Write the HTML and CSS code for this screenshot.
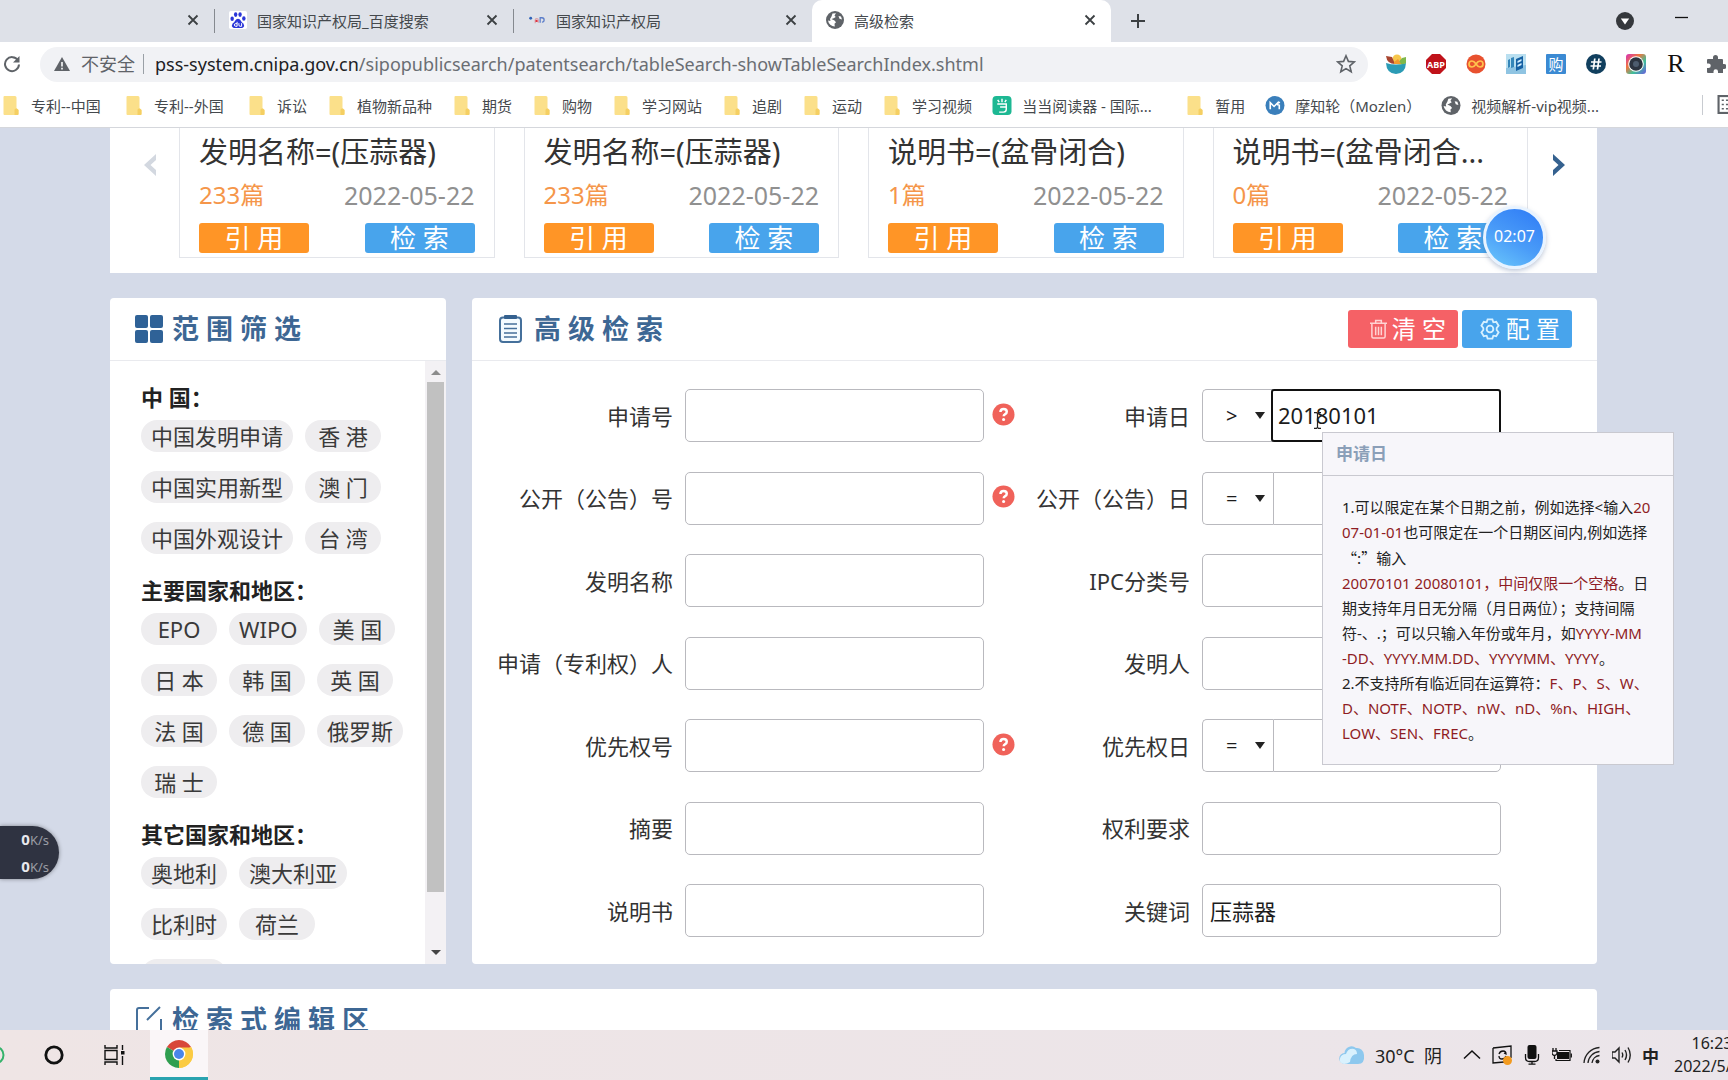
FILE: index.html
```html
<!DOCTYPE html>
<html lang="zh-CN">

<head>
  <meta charset="utf-8">
  <meta name="viewport" content="width=device-width, initial-scale=1.0">
  <title>高级检索</title>
  <link rel="stylesheet" href="styles.css">
</head>

<body>
  <svg class="sprite" aria-hidden="true">
    <symbol id="i-close" viewBox="0 0 12 12"><path d="M1.5 1.5l9 9M10.5 1.5l-9 9" stroke="#3c4043" stroke-width="1.8" fill="none"/></symbol>
    <symbol id="i-folder" viewBox="0 0 15 19"><path d="M1 0h10.500q1.500 0 1.500 1.500V12l2 2v4q0 1-1 1H1q-1 0-1-1V1q0-1 1-1z" fill="#fbe08a"/><path d="M11 19v-5q0-1.500 1.500-1.500T15 14v4q0 1-1 1z" fill="#f5cf62"/></symbol>
    <symbol id="i-globe" viewBox="0 0 18 18"><circle cx="9" cy="9" r="9" fill="#5f6368"/><path d="M10 2.200l-1.500 2.300 1.200 1.500-2 1.200L5.500 8l3 1.500 1.500 1.800-1.500 1.500.3 2.700A7 7 0 0 1 2 9.500l2.500.5-.5-2 1.500-2.500 1-3zM12.500 5l2.500.5 1 3-2.500-.8z" fill="#fff"/></symbol>
    <symbol id="i-help" viewBox="0 0 24 24"><circle cx="12" cy="12" r="11.500" fill="#f0625a"/><path d="M8.800 9.500q0-3.300 3.300-3.300t3.300 2.900q0 1.600-1.700 2.500-1.500.8-1.500 2.300" fill="none" stroke="#fff" stroke-width="2.600"/><circle cx="12.100" cy="17.300" r="1.600" fill="#fff"/></symbol>
    <symbol id="i-caret" viewBox="0 0 10 7"><path d="M0 0h10L5 7z" fill="#222"/></symbol>
  </svg>

  <!-- browser tabs -->
  <nav class="tabs">
    <div class="tab first"><button class="close" aria-label="关闭"><svg><use href="#i-close"/></svg></button></div>
    <div class="tab">
      <svg class="favicon" viewBox="0 0 20 20"><rect width="20" height="20" rx="2" fill="#fff"/><g fill="#2a36d8"><ellipse cx="3.500" cy="8.500" rx="1.900" ry="2.500"/><ellipse cx="7.400" cy="4" rx="1.900" ry="2.700"/><ellipse cx="12.300" cy="4" rx="1.900" ry="2.700"/><ellipse cx="16.500" cy="8.300" rx="1.900" ry="2.500"/><path d="M10 8.500q2 0 3 2t3 3.500q1.500 2.500 0 4t-6 .8q-4.500.7-6-.8t0-4Q6 12.500 7 10.500t3-2z"/></g><path d="M9 12v5H7.500a1.500 1.500 0 0 1 0-3H9M11 13.500v2q0 1.500 1.300 1.500H14v-3.500" fill="none" stroke="#fff" stroke-width="1.100"/></svg>
      <span>国家知识产权局_百度搜索</span>
      <button class="close" aria-label="关闭"><svg><use href="#i-close"/></svg></button>
    </div>
    <div class="tab">
      <svg class="favicon" viewBox="0 0 20 20"><circle cx="3" cy="8" r="1.600" fill="#2f63b8"/><path d="M8 13.500V10a1.700 1.700 0 0 1 3.400 0V13" fill="none" stroke="#d9a0a8" stroke-width="1.300"/><path d="M13.500 13V7.500h2a2.300 2.300 0 0 1 0 4.800" fill="none" stroke="#5b7dc9" stroke-width="1.400"/><circle cx="9.500" cy="11" r="1.300" fill="#e0313f"/></svg>
      <span>国家知识产权局</span>
      <button class="close" aria-label="关闭"><svg><use href="#i-close"/></svg></button>
    </div>
    <div class="tab active">
      <svg class="favicon"><use href="#i-globe"/></svg>
      <span>高级检索</span>
      <button class="close" aria-label="关闭"><svg><use href="#i-close"/></svg></button>
    </div>
    <button class="new-tab" aria-label="新标签页"><svg viewBox="0 0 16 16"><path d="M8 1v14M1 8h14" stroke="#3c4043" stroke-width="2"/></svg></button>
    <div class="window-tools">
      <svg width="18" height="18" viewBox="0 0 18 18"><circle cx="9" cy="9" r="9" fill="#35383c"/><path d="M4.800 6.500h8.400L9 12.500z" fill="#fff"/></svg>
      <svg width="14" height="14" viewBox="0 0 14 14"><path d="M0 3.500h13" stroke="#111" stroke-width="1.300"/></svg>
    </div>
  </nav>

  <div class="toolbar">
    <button class="reload" aria-label="重新加载"><svg viewBox="0 0 18 18"><path d="M15 5.500A7 7 0 1 0 16 9.500" fill="none" stroke="#5f6368" stroke-width="2"/><path d="M16.500 1v6.500H10z" fill="#5f6368"/></svg></button>
    <div class="address">
      <svg class="warn" viewBox="0 0 16 14"><path d="M8 0l8 14H0z" fill="#5f6368"/><path d="M8 5v4.500M8 10.800v1.700" stroke="#f1f3f4" stroke-width="1.700"/></svg>
      <span class="unsafe">不安全</span>
      <span class="url"><b>pss-system.cnipa.gov.cn</b>/sipopublicsearch/patentsearch/tableSearch-showTableSearchIndex.shtml</span>
      <svg class="star" viewBox="0 0 20 20"><path d="M10 1.800l2.400 5.600 6 .5-4.600 4 1.400 5.900-5.200-3.200-5.200 3.200 1.400-5.900-4.600-4 6-.5z" fill="none" stroke="#5f6368" stroke-width="1.600"/></svg>
    </div>
    <div class="extensions">
      <svg viewBox="0 0 20 20"><path d="M0 9q10 3 20 0-.5 10.500-10 11Q.5 19.500 0 9z" fill="#2b9bb5"/><circle cx="11" cy="5" r="4.500" fill="#f6c64b"/><path d="M0 2l6 1 3 7Q1 10 0 2z" fill="#a8452f"/><path d="M20 3l-4 1-5 6q7 1 9-1z" fill="#7fb84a"/><path d="M8 8l4-3 3 5H8z" fill="#f39a2d"/></svg>
      <svg viewBox="0 0 20 20"><path d="M6 0h8l6 6v8l-6 6H6l-6-6V6z" fill="#c0121a"/><text x="10" y="13.500" text-anchor="middle" class="abp">ABP</text></svg>
      <svg viewBox="0 0 20 20"><circle cx="10" cy="10" r="9.500" fill="#e8512f"/><path d="M10 10q-2-3-4-3a3 3 0 0 0 0 6q2 0 4-3t4-3a3 3 0 0 1 0 6q-2 0-4-3z" fill="none" stroke="#ffc34d" stroke-width="1.700"/></svg>
      <svg viewBox="0 0 20 20"><rect width="20" height="20" fill="#b9dff0"/><path d="M0 14l20-3v9H0z" fill="#8fc4e2"/><path d="M2 6l2-1v8l-2 1zM5 4l3-1v10l-3 1z" fill="#3486b9"/><path d="M10 5l7-3v12l-7 3z" fill="#1560a3"/><path d="M11.500 7l4-2v2l-4 2zM11.500 11l4-2v2l-4 2z" fill="#d4efff"/></svg>
      <svg viewBox="0 0 20 20"><rect width="20" height="20" rx="1" fill="#3b8ad3"/><text x="10" y="15.500" text-anchor="middle" class="gou">购</text></svg>
      <svg viewBox="0 0 20 20"><circle cx="10" cy="10" r="10" fill="#113f5e"/><path d="M8.800 4.500l-1.500 11M13 4.500l-1.500 11M5 8h10.500M4.500 12H15" stroke="#fff" stroke-width="1.700"/></svg>
      <svg viewBox="0 0 20 20"><defs><linearGradient id="cam" x1="0" y1="0" x2="1" y2="1"><stop offset="0" stop-color="#d62fb8"/><stop offset=".35" stop-color="#f0763f"/><stop offset=".65" stop-color="#3fbf9a"/><stop offset="1" stop-color="#6a5be0"/></linearGradient></defs><rect width="20" height="20" rx="3" fill="url(#cam)"/><circle cx="10" cy="10" r="7.800" fill="#fff"/><circle cx="10" cy="10" r="6.800" fill="#2c3440"/><circle cx="10" cy="10" r="3" fill="#4d5c6e"/></svg>
      <span class="ext-r">R</span>
      <svg viewBox="0 0 20 20"><path d="M2 5h5V3.500a2.500 2.500 0 0 1 5 0V5h4q1 0 1 1v4h1a2.500 2.500 0 0 1 0 5h-1v4h-5v-1.500a2.200 2.200 0 0 0-4.500 0V19H2q-1 0-1-1v-4h1.500a2.200 2.200 0 0 0 0-4.500H1V6q0-1 1-1z" fill="#5f6368"/></svg>
    </div>
  </div>

  <div class="bookmarks">
    <a href="#" class="folder-wide"><svg><use href="#i-folder"/></svg>专利--中国</a>
    <a href="#" class="folder-wide"><svg><use href="#i-folder"/></svg>专利--外国</a>
    <a href="#"><svg><use href="#i-folder"/></svg>诉讼</a>
    <a href="#"><svg><use href="#i-folder"/></svg>植物新品种</a>
    <a href="#"><svg><use href="#i-folder"/></svg>期货</a>
    <a href="#"><svg><use href="#i-folder"/></svg>购物</a>
    <a href="#"><svg><use href="#i-folder"/></svg>学习网站</a>
    <a href="#"><svg><use href="#i-folder"/></svg>追剧</a>
    <a href="#"><svg><use href="#i-folder"/></svg>运动</a>
    <a href="#"><svg><use href="#i-folder"/></svg>学习视频</a>
    <a href="#" class="long"><svg viewBox="0 0 20 20"><rect width="20" height="20" rx="4" fill="#1db893"/><path d="M10 3v3.500M5.500 4l1.500 2.500M14.500 4L13 6.500M5 8.500h9.500V14a3 3 0 0 1-3 3H7M8 11.500h6.500" fill="none" stroke="#fff" stroke-width="1.500"/></svg><span>当当阅读器 - 国际...</span></a>
    <a href="#"><svg><use href="#i-folder"/></svg>暂用</a>
    <a href="#"><svg viewBox="0 0 20 20"><circle cx="10" cy="10" r="10" fill="#3a7fbb"/><path d="M5 14V7l4 4 4-4v3M14.500 9v5M14.500 6v1.500" fill="none" stroke="#fff" stroke-width="1.700"/></svg>摩知轮（Mozlen）</a>
    <a href="#"><svg><use href="#i-globe"/></svg>视频解析-vip视频...</a>
    <span class="reading-list"><svg viewBox="0 0 18 18"><rect x="1" y="1" width="16" height="16" fill="none" stroke="#5f6368" stroke-width="2"/><path d="M4 5h2M8 5h7M4 9h2M8 9h7M4 13h2M8 13h7" stroke="#5f6368" stroke-width="1.600"/></svg></span>
  </div>

  <div class="viewport">
    <main class="page">
      <section class="history">
        <button class="arrow" aria-label="上一页"><svg viewBox="0 0 12 22"><path d="M12 0v6L6.500 11 12 16v6L0 11z" fill="#d3d8e0"/></svg></button>
        <article class="record">
          <h3>发明名称=(压蒜器)</h3>
          <p><span class="count">233篇</span><time>2022-05-22</time></p>
          <div class="actions"><button class="btn orange">引 用</button><button class="btn blue">检 索</button></div>
        </article>
        <article class="record">
          <h3>发明名称=(压蒜器)</h3>
          <p><span class="count">233篇</span><time>2022-05-22</time></p>
          <div class="actions"><button class="btn orange">引 用</button><button class="btn blue">检 索</button></div>
        </article>
        <article class="record">
          <h3>说明书=(盆骨闭合)</h3>
          <p><span class="count">1篇</span><time>2022-05-22</time></p>
          <div class="actions"><button class="btn orange">引 用</button><button class="btn blue">检 索</button></div>
        </article>
        <article class="record">
          <h3>说明书=(盆骨闭合...</h3>
          <p><span class="count">0篇</span><time>2022-05-22</time></p>
          <div class="actions"><button class="btn orange">引 用</button><button class="btn blue">检 索</button></div>
        </article>
        <button class="arrow" aria-label="下一页"><svg viewBox="0 0 12 22"><path d="M0 0v6l5.500 5L0 16v6l12-11z" fill="#35618f"/></svg></button>
      </section>

      <div class="columns">
        <aside class="panel filter">
          <header class="panel-head">
            <svg width="28" height="28" viewBox="0 0 28 28"><g fill="#2f6297"><rect width="13" height="13" rx="2"/><rect x="15" width="13" height="13" rx="2"/><rect y="15" width="13" height="13" rx="2"/><rect x="15" y="15" width="13" height="13" rx="2"/></g></svg>
            <h2>范 围 筛 选</h2>
          </header>
          <div class="filter-body">
            <div class="regions">
              <h4>中 国：</h4>
              <div class="chips two">
                <button>中国发明申请</button><button>香 港</button>
                <button>中国实用新型</button><button>澳 门</button>
                <button>中国外观设计</button><button>台 湾</button>
              </div>
              <h4>主要国家和地区：</h4>
              <div class="chips">
                <button>EPO</button><button>WIPO</button><button>美 国</button>
                <button>日 本</button><button>韩 国</button><button>英 国</button>
                <button>法 国</button><button>德 国</button><button>俄罗斯</button>
                <button>瑞 士</button>
              </div>
              <h4>其它国家和地区：</h4>
              <div class="chips two">
                <button>奥地利</button><button>澳大利亚</button>
                <button>比利时</button><button>荷兰</button>
                <button class="rest" aria-label="更多"></button>
              </div>
            </div>
            <div class="scrollbar" aria-hidden="true">
              <svg viewBox="0 0 10 7"><path d="M0 6h10L5 1z" fill="#8c8c8c"/></svg>
              <i></i>
              <svg viewBox="0 0 10 7"><path d="M0 1h10L5 6z" fill="#444"/></svg>
            </div>
          </div>
        </aside>

        <section class="panel search">
          <header class="panel-head">
            <svg width="23" height="28" viewBox="0 0 23 28"><rect x="1" y="2.500" width="21" height="24.500" rx="3" fill="#f4fbff" stroke="#45709b" stroke-width="2"/><rect x="5" y="0" width="13" height="4" rx="1" fill="#35618f"/><path d="M5 9h13M5 13.500h13M5 18h13M5 22h13" stroke="#45709b" stroke-width="1.500"/></svg>
            <h2>高 级 检 索</h2>
            <div class="head-actions">
              <button class="btn red"><svg width="17" height="20" viewBox="0 0 18 21"><path d="M0 4.500h18M6 4V1.500h6V4M2 5v13.500q0 1.500 1.500 1.500h11q1.500 0 1.500-1.500V5M6 8v9M9 8v9M12 8v9" fill="none" stroke="#ffd3d3" stroke-width="1.600"/></svg>清 空</button>
              <button class="btn blue"><svg width="22" height="22" viewBox="0 0 23 22"><path d="M9 1h5l1 3 3-.5 2.500 4L18.500 10v2l2 2.500-2.500 4-3-.5-1 3H9l-1-3-3 .5-2.500-4 2-2.500v-2l-2-2.500L5 3.500 8 4z" fill="none" stroke="#d6f0ff" stroke-width="1.900"/><circle cx="11.500" cy="11" r="3.500" fill="none" stroke="#d6f0ff" stroke-width="1.900"/></svg>配 置</button>
            </div>
          </header>
          <form class="fields" autocomplete="off">
            <div class="field"><label for="f-appno">申请号</label><input type="text" id="f-appno"><svg class="help"><use href="#i-help"/></svg></div>
            <div class="field right">
              <label for="f-appdate">申请日</label>
              <div class="dated">
                <select aria-label="申请日运算符"><option>&gt;</option><option>=</option><option>&lt;</option></select>
                <svg class="caret"><use href="#i-caret"/></svg>
                <input type="text" id="f-appdate" class="focused" value="20180101">
                <svg class="ibeam" viewBox="0 0 9 17"><path d="M1 .7h2.500l1 1 1-1H8M4.500 1.500v14M1 16.300h2.500l1-1 1 1H8" fill="none" stroke="#222" stroke-width="1.200"/></svg>
                <div class="tooltip" role="tooltip">
                  <h5>申请日</h5>
                  <p>1.可以限定在某个日期之前，例如选择&lt;输入<em>20</em><br>
                    <em>07-01-01</em>也可限定在一个日期区间内,例如选择<br>
                    <span class="cjk">“:”输入</span><br>
                    <em>20070101 20080101，中间仅限一个空格</em>。日<br>
                    期支持年月日无分隔（月日两位）；支持间隔<br>
                    符-、.；可以只输入年份或年月，如<em>YYYY-MM</em><br>
                    <em>-DD、YYYY.MM.DD、YYYYMM、YYYY</em>。<br>
                    2.不支持所有临近同在运算符：<em>F、P、S、W、</em><br>
                    <em>D、NOTF、NOTP、nW、nD、%n、HIGH、</em><br>
                    <em>LOW、SEN、FREC</em>。</p>
                </div>
              </div>
            </div>
            <div class="field"><label for="f-pubno">公开（公告）号</label><input type="text" id="f-pubno"><svg class="help"><use href="#i-help"/></svg></div>
            <div class="field right">
              <label for="f-pubdate">公开（公告）日</label>
              <div class="dated">
                <select aria-label="公开日运算符"><option>=</option></select>
                <svg class="caret"><use href="#i-caret"/></svg>
                <input type="text" id="f-pubdate">
              </div>
            </div>
            <div class="field"><label for="f-title">发明名称</label><input type="text" id="f-title"></div>
            <div class="field right"><label for="f-ipc">IPC分类号</label><input type="text" id="f-ipc"></div>
            <div class="field"><label for="f-applicant">申请（专利权）人</label><input type="text" id="f-applicant"></div>
            <div class="field right"><label for="f-inventor">发明人</label><input type="text" id="f-inventor"></div>
            <div class="field"><label for="f-prino">优先权号</label><input type="text" id="f-prino"><svg class="help"><use href="#i-help"/></svg></div>
            <div class="field right">
              <label for="f-pridate">优先权日</label>
              <div class="dated">
                <select aria-label="优先权日运算符"><option>=</option></select>
                <svg class="caret"><use href="#i-caret"/></svg>
                <input type="text" id="f-pridate">
              </div>
            </div>
            <div class="field"><label for="f-abstract">摘要</label><input type="text" id="f-abstract"></div>
            <div class="field right"><label for="f-claims">权利要求</label><input type="text" id="f-claims"></div>
            <div class="field"><label for="f-desc">说明书</label><input type="text" id="f-desc"></div>
            <div class="field right"><label for="f-keyword">关键词</label><input type="text" id="f-keyword" value="压蒜器"></div>
          </form>
        </section>
      </div>

      <section class="panel">
        <header class="panel-head">
          <svg width="28" height="28" viewBox="0 0 28 28"><path d="M14 2H4Q2 2 2 4v20q0 2 2 2h20q2 0 2-2V13M12 14L25 1" fill="none" stroke="#45709b" stroke-width="2"/></svg>
          <h2>检 索 式 编 辑 区</h2>
        </header>
      </section>
    </main>

    <div class="timer">02:07</div>
    <div class="net-speed"><span><b>0</b>K/s</span><span><b>0</b>K/s</span></div>
  </div>

  <footer class="taskbar">
    <svg class="green" viewBox="0 0 20 20"><circle cx="10" cy="10" r="8.500" fill="none" stroke="#35b36b" stroke-width="2"/></svg>
    <svg class="cortana" viewBox="0 0 20 20"><circle cx="10" cy="10" r="8.200" fill="none" stroke="#111" stroke-width="2.800"/></svg>
    <svg class="task-view" viewBox="0 0 21 20"><path d="M1 0v3h12V0M1 20v-3h12v3M1 5.500h12v9H1zM18.500 0v5M18.500 11v9" fill="none" stroke="#111" stroke-width="1.400"/><rect x="17" y="6" width="3.500" height="3.500" fill="#111"/></svg>
    <a href="#" class="app" aria-label="Chrome">
      <svg viewBox="0 0 28 28"><path d="M14 14L1.900 7A14 14 0 0 1 26.100 7z" fill="#d8473a"/><path d="M14 14L26.100 7A14 14 0 0 1 14 28z" fill="#fbcb43"/><path d="M14 14l0 14A14 14 0 0 1 1.900 7z" fill="#2f9e50"/><path d="M14 7.500h12.400A14 14 0 0 1 14 28l5.600-10.700z" fill="#fbcb43"/><circle cx="14" cy="14" r="6.400" fill="#fff"/><circle cx="14" cy="14" r="5" fill="#4a86ea"/></svg>
    </a>
    <div class="tray">
      <svg class="cloud" viewBox="0 0 26 20"><path d="M6 19a5.500 5.500 0 0 1-.5-11A7 7 0 0 1 17 3a7 7 0 0 1 8 7q1 9-6 9z" fill="#8dc8ee"/><path d="M5 19q-5-1-4-5.500T7 9q2-6 8-5 3 1 3 5-6 0-7 8-3 2-6 2z" fill="#d9f1fd"/></svg>
      <span class="weather">30°C&nbsp; 阴</span>
      <svg class="icon" viewBox="0 0 20 20"><path d="M2 13.500L10 6l8 7.500" fill="none" stroke="#111" stroke-width="1.500"/></svg>
      <svg class="icon" viewBox="0 0 20 20"><path d="M1 3l18-2v12M12 17L1 18V3M7 9q1-3 4-3t3 3l-2-1M14 11q-1 3-4 3t-3-3" fill="none" stroke="#111" stroke-width="1.300"/><circle cx="15.500" cy="15.500" r="4.500" fill="#f29a1f"/></svg>
      <svg class="icon" viewBox="0 0 20 20"><rect x="5.500" y="0" width="9" height="14" rx="2" fill="#111"/><path d="M3.500 9v3.500q0 4 4 4h5q4 0 4-4V9M10 16.500V19M6.500 19.200h7" fill="none" stroke="#111" stroke-width="1.300"/></svg>
      <svg class="icon" viewBox="0 0 20 20"><path d="M4 14v1.500h14v-10H7" fill="none" stroke="#111" stroke-width="1.200"/><rect x="5" y="7" width="12" height="7" fill="#111"/><path d="M19.300 8.500v4M1 3v3M4 3v3M0 6h5v2.500q-1 2-2.500 2T0 8.500zM2.500 10v4" fill="none" stroke="#111" stroke-width="1.300"/></svg>
      <svg class="icon" viewBox="0 0 20 20"><g fill="none" stroke="#222" stroke-width="1.300"><path d="M2 18A16.500 16.500 0 0 1 17.500 2.500M6 18A12.500 12.500 0 0 1 17.500 6.500M10 18A8.500 8.500 0 0 1 17.500 10.500"/></g><circle cx="15.500" cy="16.500" r="2" fill="#222"/></svg>
      <svg class="icon" viewBox="0 0 20 20"><path d="M0 7h3l4-4v14l-4-4H0zM10 7.500q1.500 2.500 0 5M13 5q3 5 0 10M16 2.500q4.500 7.500 0 15" fill="none" stroke="#222" stroke-width="1.400"/></svg>
      <span class="ime">中</span>
      <div class="clock"><span>16:23</span><span>2022/5/22</span></div>
    </div>
  </footer>
</body>

</html>
```

FILE: styles.css
```css
* {
  box-sizing: border-box;
}

body {
  margin: 0;
  height: 100vh;
  display: flex;
  flex-direction: column;
  overflow: hidden;
  font-family: "Noto Sans", "Noto Sans CJK SC", sans-serif;
  font-size: 15px;
  color: #333;
  background-color: #d4dae8;
}

button,
input,
select {
  font-family: inherit;
  margin: 0;
}

button {
  border: none;
  padding: 0;
  background: none;
  cursor: pointer;
}

a {
  color: inherit;
  text-decoration: none;
}

svg {
  flex: none;
}

h2,
h3,
h4,
h5,
p {
  margin: 0;
}

.sprite {
  position: absolute;
  width: 0;
  height: 0;
}

/* browser chrome */
.tabs {
  flex: none;
  display: flex;
  height: 42px;
  background-color: #dee1e8;
}

.tab {
  width: 299px;
  display: flex;
  align-items: center;
  gap: 10px;
  padding: 0 15px 2px 14px;
  color: #45494d;
}

.tab.first {
  width: 214px;
}

.tab + .tab:not(.active) {
  border-left: 1px solid #85898f;
  border-image: linear-gradient(transparent 22%, #85898f 22%, #85898f 78%, transparent 78%) 1;
}

.tab.active {
  background-color: #fff;
  border-radius: 10px 10px 0 0;
}

.favicon {
  width: 18px;
  height: 20px;
}

.close {
  margin-left: auto;
  height: 20px;
}

.close svg {
  display: block;
  width: 12px;
  height: 12px;
}

.close,
.new-tab {
  display: flex;
  align-items: center;
}

.new-tab {
  margin-left: 19px;
}

.new-tab svg {
  width: 16px;
  height: 16px;
}

.window-tools {
  margin-left: auto;
  display: flex;
  align-items: center;
  gap: 41px;
  padding-right: 39px;
}

.toolbar {
  flex: none;
  display: flex;
  align-items: center;
  height: 44px;
  background-color: #fff;
}

.reload {
  width: 40px;
  padding-left: 3px;
  text-align: left;
}

.reload svg {
  display: block;
  width: 18px;
  height: 18px;
}

.address {
  flex: 1;
  display: flex;
  align-items: center;
  height: 35px;
  padding: 0 12px 0 14px;
  border-radius: 18px;
  background-color: #f1f2f5;
  font-size: 18px;
  white-space: nowrap;
}

.warn {
  width: 16px;
  height: 14px;
}

.unsafe {
  margin-left: 11px;
  padding-right: 8px;
  line-height: 20px;
  border-right: 1px solid #9aa0a6;
  color: #5f6368;
}

.url {
  flex: 1;
  margin-left: 11px;
  color: #6a6e73;
}

.url b {
  font-weight: normal;
  color: #202124;
}

.star {
  width: 20px;
  height: 20px;
}

.extensions {
  display: flex;
  align-items: center;
  gap: 20px;
  padding: 0 2px 0 18px;
}

.extensions svg,
.ext-r {
  width: 20px;
  height: 20px;
}

.ext-r {
  font: 26px/20px "Liberation Serif", serif;
  text-align: center;
  color: #111;
}

.abp {
  font: bold 9px "Open Sans", sans-serif;
  fill: #fff;
}

.gou {
  font: 15px "Noto Sans CJK SC", sans-serif;
  fill: #fff;
}

.bookmarks {
  flex: none;
  display: flex;
  align-items: center;
  gap: 20px;
  height: 42px;
  padding: 0 0 3px 1px;
  background-color: #fff;
  border-bottom: 1px solid #d5d7dc;
  white-space: nowrap;
  color: #45494d;
}

.bookmarks a {
  display: flex;
  align-items: center;
  gap: 10px;
}

.bookmarks svg {
  width: 20px;
  height: 19px;
}

.bookmarks .folder-wide {
  min-width: 103px;
}

.bookmarks .long {
  min-width: 173px;
}

.reading-list {
  margin-left: auto;
  width: 26px;
  height: 20px;
  padding-left: 14px;
  border-left: 1px solid #c8cbd0;
}

/* page */
.viewport {
  flex: 1;
  min-height: 0;
  overflow: hidden;
  position: relative;
}

.page {
  display: flex;
  flex-direction: column;
  gap: 25px;
  margin: 0 131px 0 110px;
}

.history {
  display: flex;
  align-items: flex-start;
  gap: 29px;
  padding: 0 32px 15px 34px;
  background-color: #fff;
}

.arrow {
  width: 12px;
  margin-top: 26px;
}

.arrow:first-child {
  margin-right: -6px;
}

.arrow:last-child {
  margin-left: -4px;
}

.arrow svg {
  display: block;
  width: 12px;
  height: 22px;
}

.record {
  flex: 1;
  padding: 4px 19px;
  border: 1px solid #e3e5ea;
  border-top: none;
}

.record h3 {
  margin-bottom: 2px;
  font-size: 29px;
  font-weight: normal;
  line-height: 40px;
  white-space: nowrap;
}

.record p {
  display: flex;
  justify-content: space-between;
  font-size: 24px;
  line-height: 42px;
}

.record time {
  font-size: 25px;
  color: #909090;
}

.count {
  color: #f5964a;
}

.actions {
  display: flex;
  justify-content: space-between;
  margin-top: 7px;
}

.btn {
  width: 110px;
  height: 30px;
  border-radius: 3px;
  font-size: 26px;
  line-height: 30px;
  color: #fff;
}

.orange {
  background-color: #ff9526;
}

.blue {
  background-color: #48a4ec;
}

.red {
  background-color: #f56166;
}

.columns {
  display: flex;
  gap: 26px;
}

.panel {
  background-color: #fff;
  border-radius: 4px;
}

.panel-head {
  display: flex;
  align-items: center;
  height: 63px;
  padding: 0 25px;
  gap: 9px;
  border-bottom: 1px solid #e9eaee;
}

.panel-head h2 {
  font-size: 27px;
  line-height: 40px;
  color: #3d6794;
  white-space: nowrap;
}

.filter {
  flex: none;
  width: 336px;
}

.filter-body {
  display: flex;
  height: 603px;
}

.regions {
  flex: 1;
  padding: 19px 0 0 31px;
  overflow: hidden;
}

.regions h4 {
  padding-bottom: 6px;
  font-size: 22px;
  line-height: 34px;
  color: #222;
}

.chips {
  display: flex;
  flex-wrap: wrap;
  gap: 19px 12px;
  margin-bottom: 19px;
}

.chips.two {
  padding-right: 40px;
}

.chips button {
  min-width: 76px;
  height: 32px;
  padding: 0 10px;
  border-radius: 16px;
  background-color: #eeedef;
  font-size: 22px;
  line-height: 32px;
  color: #3a3a3a;
}

.chips .rest {
  width: 86px;
}

.scrollbar {
  width: 21px;
  display: flex;
  flex-direction: column;
  align-items: center;
  padding: 8px 0;
  background-color: #f3f1f4;
}

.scrollbar svg {
  width: 10px;
  height: 7px;
}

.scrollbar i {
  width: 17px;
  height: 510px;
  margin: 6px 0 auto;
  background-color: #c1c1c1;
}

.search {
  flex: 1;
  display: flex;
  flex-direction: column;
}

.search .panel-head {
  padding-left: 27px;
  gap: 12px;
}

.head-actions {
  display: flex;
  gap: 4px;
  margin-left: auto;
}

.head-actions .btn {
  display: flex;
  align-items: center;
  justify-content: flex-end;
  gap: 5px;
  height: 38px;
  padding-right: 12px;
  font-size: 24px;
}

.fields {
  flex: 1;
  display: grid;
  grid-template-columns: 543fr 486fr;
  align-content: space-between;
  padding: 28px 96px 27px 0;
  font-size: 22px;
}

.field {
  display: grid;
  grid-template-columns: 200px 1fr 23px;
  align-items: center;
  column-gap: 8px;
}

.field.right {
  grid-template-columns: 174px 1fr;
}

.field label {
  margin-right: -5px;
  padding: 0 4px 2px 0;
  text-align: right;
  white-space: nowrap;
}

.field input,
.field select {
  width: 100%;
  min-width: 0;
  height: 53px;
  padding: 0 7px 2px;
  border: 1px solid #b9b9be;
  border-radius: 5px;
  background-color: #fff;
  font-size: 22px;
  color: #1c1c1c;
}

.field > input,
.dated {
  margin-left: 5px;
}

.field > input {
  width: auto;
}

.help {
  width: 23px;
  height: 23px;
  margin-bottom: 3px;
}

.dated {
  display: flex;
  position: relative;
}

.field .dated select {
  flex: none;
  width: 71px;
  appearance: none;
  padding: 0 0 0 23px;
  border-right: none;
  border-radius: 5px 0 0 5px;
  font-size: 20px;
}

.dated input {
  border-radius: 0 5px 5px 0;
}

.field .focused {
  margin-left: -2px;
  padding-left: 5px;
  border: 2px solid #111;
  border-radius: 3px;
  outline: none;
}

.caret {
  position: absolute;
  left: 53px;
  top: 23px;
  width: 10px;
  height: 7px;
  pointer-events: none;
}

.ibeam {
  position: absolute;
  left: 111px;
  top: 23px;
  width: 9px;
  height: 17px;
}

.tooltip {
  position: absolute;
  z-index: 2;
  left: 120px;
  top: 43px;
  width: 352px;
  height: 333px;
  border: 1px solid #c9c9d0;
  background-color: #f7f6fa;
  color: #222;
}

.tooltip h5 {
  padding: 0 13px;
  border-bottom: 1px solid #c9c9d0;
  font-size: 17px;
  line-height: 42px;
  color: #8b9fb8;
}

.tooltip p {
  padding: 19px;
  font-size: 15px;
  line-height: 25px;
  white-space: nowrap;
}

.tooltip em {
  font-style: normal;
  color: #8f1c24;
}

.tooltip .cjk {
  font-family: "Noto Sans CJK SC", sans-serif;
}

/* floating widgets */
.timer {
  position: absolute;
  right: 182px;
  top: 78px;
  width: 63px;
  height: 63px;
  border: 3px solid #e8f3ff;
  border-radius: 50%;
  background: linear-gradient(210deg, #3583f6 15%, #4a9cf8 55%, #6cc9fb);
  box-shadow: 0 2px 5px rgba(60, 90, 140, 0.35);
  font-size: 16px;
  line-height: 55px;
  text-align: center;
  color: #fff;
}

.net-speed {
  position: absolute;
  left: 0;
  bottom: 151px;
  width: 59px;
  height: 53px;
  padding-right: 10px;
  border-radius: 0 27px 27px 0;
  background-color: #2f3341;
  box-shadow: 0 0 4px rgba(0, 0, 0, 0.4);
  font-size: 13px;
  line-height: 26px;
  text-align: right;
  color: #9a9ca4;
}

.net-speed span {
  display: block;
}

.net-speed b {
  font-size: 15px;
  color: #e8e8ec;
}

/* windows taskbar */
.taskbar {
  flex: none;
  display: flex;
  align-items: center;
  height: 50px;
  overflow: hidden;
  background: linear-gradient(90deg, #efe5e5, #ebe5ea);
  color: #222;
}

.green {
  width: 20px;
  height: 20px;
  margin-left: -15px;
}

.cortana {
  width: 20px;
  height: 20px;
  margin-left: 39px;
}

.task-view {
  width: 21px;
  height: 20px;
  margin-left: 40px;
}

.app {
  display: flex;
  align-items: center;
  justify-content: center;
  width: 58px;
  height: 50px;
  margin-left: 25px;
  border-bottom: 3px solid #2aa3b0;
  background-color: #faf6f8;
}

.app svg {
  width: 28px;
  height: 28px;
}

.tray {
  margin-left: auto;
  margin-right: -22px;
  display: flex;
  align-items: center;
  gap: 10px;
}

.cloud {
  width: 26px;
  height: 20px;
}

.weather {
  margin-right: 10px;
  font-size: 18px;
}

.icon {
  width: 20px;
  height: 20px;
}

.ime {
  font-size: 17px;
  font-weight: bold;
}

.clock {
  display: flex;
  flex-direction: column;
  align-items: center;
  margin-left: 5px;
  font-size: 16px;
  line-height: 23px;
}
```
